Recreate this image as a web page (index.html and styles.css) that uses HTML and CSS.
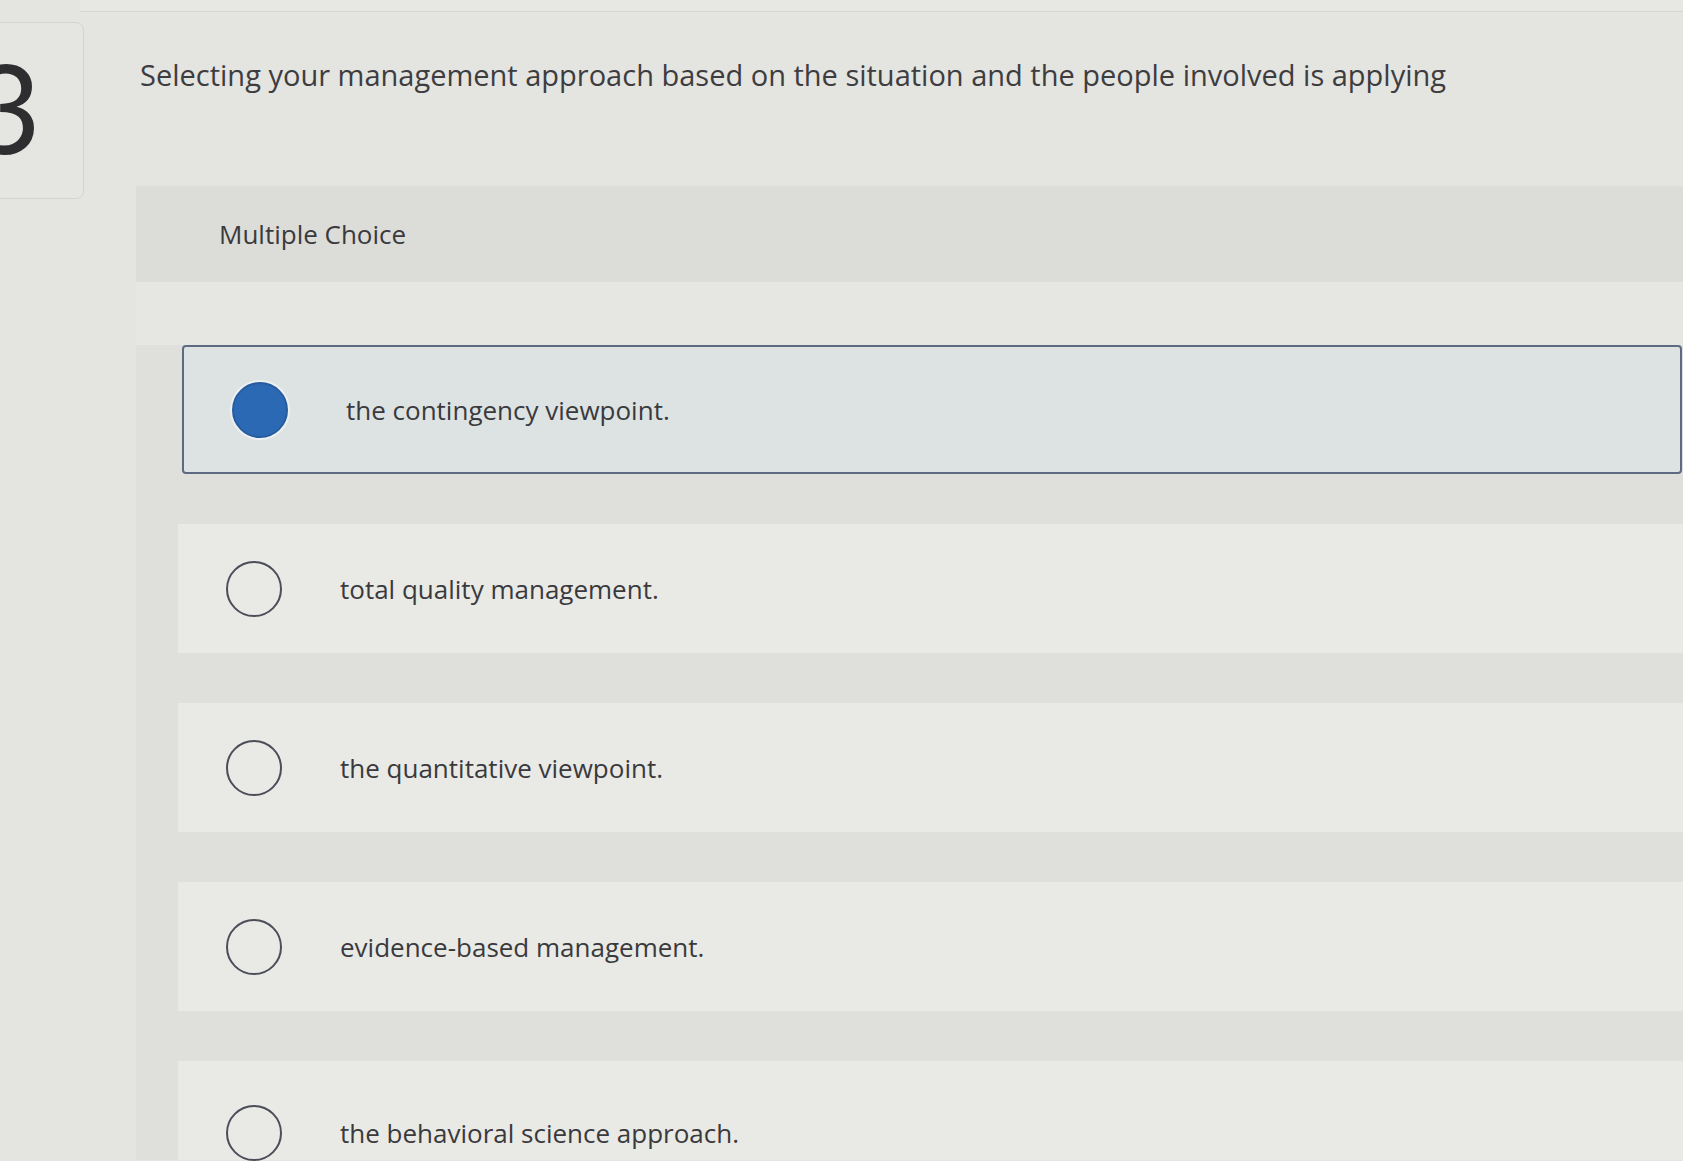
FILE: index.html
```html
<!DOCTYPE html>
<html lang="en">
<head>
<meta charset="utf-8">
<title>Multiple Choice</title>
<link rel="stylesheet" href="styles.css">
</head>
<body>
<div class="topline"></div>
<div class="page">
  <aside class="side">
    <div class="qnum"><span class="qnum-digit">3</span></div>
  </aside>
  <main class="content">
    <h1 class="question">Selecting your management approach based on the situation and the people involved is applying</h1>
    <section class="card">
      <header class="card-head">Multiple Choice</header>
      <div class="choices">
        <div class="choice selected"><span class="radio"></span><span class="label">the contingency viewpoint.</span></div>
        <div class="choice"><span class="radio"></span><span class="label">total quality management.</span></div>
        <div class="choice"><span class="radio"></span><span class="label">the quantitative viewpoint.</span></div>
        <div class="choice"><span class="radio"></span><span class="label">evidence-based management.</span></div>
        <div class="choice last"><span class="radio"></span><span class="label">the behavioral science approach.</span></div>
      </div>
    </section>
  </main>
</div>
</body>
</html>
```
FILE: styles.css
```css
html, body {
  margin: 0;
  padding: 0;
}
body {
  background: #e4e4e1;
  font-family: "Open Sans", Lato, "Liberation Sans", sans-serif;
  color: #3d3d40;
  width: 1683px;
  height: 1161px;
  overflow: hidden;
}
.topline {
  height: 11px;
  border-bottom: 1px solid #d6d6d3;
  margin-left: 80px;
  background: #e7e7e4;
}
.page {
  display: grid;
  grid-template-columns: 136px 1fr;
}
.side {
  padding-top: 10px;
}
.qnum {
  width: 90px;
  height: 175px;
  margin-left: -8px;
  border: 1px solid #d3d3d0;
  border-radius: 8px;
  background: #e5e5e2;
  overflow: hidden;
  display: flex;
  align-items: flex-start;
}
.qnum-digit {
  display: block;
  font-family: Lato, "Open Sans", sans-serif;
  font-size: 124px;
  font-weight: 400;
  line-height: 1;
  color: #2e2e30;
  margin-left: -24px;
  margin-top: 21px;
}
.content {
  display: flex;
  flex-direction: column;
}
.question {
  margin: 0;
  padding: 43px 0 0 4px;
  height: 174px;
  box-sizing: border-box;
  font-size: 29px;
  font-weight: 400;
  line-height: 40px;
  color: #3d3d40;
  white-space: nowrap;
}
.card {
  display: flex;
  flex-direction: column;
}
.card-head {
  height: 96px;
  background: #dcdcd9;
  padding-left: 83px;
  display: flex;
  align-items: center;
  font-size: 26px;
  color: #3a3a3d;
}
.choices {
  background: #dfdfdc;
  padding-top: 63px;
  background-image: linear-gradient(#e6e6e3, #e6e6e3);
  background-repeat: no-repeat;
  background-size: 100% 63px;
  display: flex;
  flex-direction: column;
  gap: 50px;
  padding-left: 42px;
}
.choice {
  height: 129px;
  flex: none;
  box-sizing: border-box;
  background: #e9e9e6;
  display: flex;
  align-items: center;
  padding-left: 48px;
  font-size: 26px;
  color: #3a3a3d;
}
.choice.last {
  height: 99px;
  align-items: flex-start;
  padding-top: 48px;
}
.choice.selected {
  background: #dde2e3;
  border: 2px solid #5e6a82;
  border-radius: 4px;
  margin-left: 4px;
  margin-right: 1px;
  padding-left: 48px;
}
.radio {
  width: 56px;
  height: 56px;
  box-sizing: border-box;
  border: 2.5px solid #4b4d59;
  border-radius: 50%;
  flex: none;
}
.last .radio {
  margin-top: -4px;
}
.last .label {
  line-height: 48px;
}
.selected .radio {
  background: #2c69b4;
  border-color: #275d9f;
  box-shadow: 0 0 0 2px #eef1f3;
}
.label {
  margin-left: 58px;
  white-space: nowrap;
}
```
